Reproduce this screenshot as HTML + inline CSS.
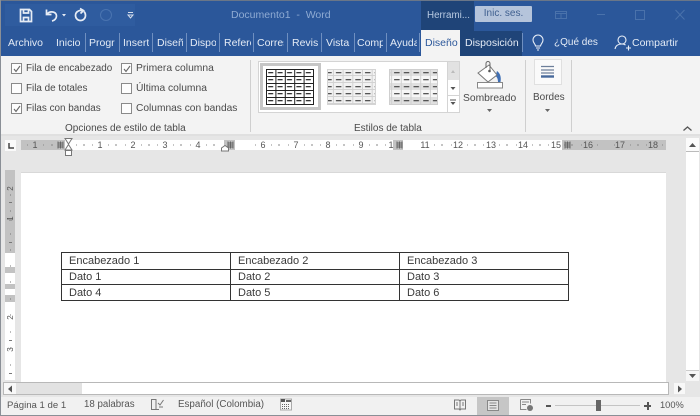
<!DOCTYPE html>
<html lang="es"><head><meta charset="utf-8"><title>Documento1 - Word</title>
<style>
html,body{margin:0;padding:0}
body{width:700px;height:416px;overflow:hidden;position:relative;background:#e6e6e6;font-family:"Liberation Sans",sans-serif;color:#444}
#r{position:absolute;left:0;top:0;width:700px;height:416px;overflow:hidden;filter:blur(.3px)}
.a{position:absolute;white-space:nowrap}
.t{position:absolute;top:36px;font-size:10.5px;color:#e4ebf5;line-height:14px;white-space:nowrap;overflow:hidden}
.s{position:absolute;top:33px;width:1px;height:19px;background:#6f8fc0}
.l{position:absolute;font-size:10px;color:#4a4a4a;line-height:13px;white-space:nowrap}
.c{position:absolute;width:9px;height:9px;border:1px solid #8a8a8a;background:#fdfdfd}
.c svg{position:absolute;left:-.5px;top:-.5px}
.n{position:absolute;top:140px;font-size:9px;color:#555;line-height:10px;width:14px;text-align:center}
.v{position:absolute;left:6px;width:9px;height:9px;font-size:8px;color:#555;line-height:9px;text-align:center;transform:rotate(-90deg)}
td{border:1px solid #333;padding:0 0 0 7px;font-size:11px;color:#3a3a3a;line-height:14px;width:161px;box-sizing:content-box}
table{border-collapse:collapse;table-layout:fixed;width:508px}
</style></head><body><div id="r">
<!-- title -->
<div class="a" style="left:0;top:0;width:700px;height:56px;background:#2b579a"></div>
<div class="a" style="left:0;top:0;width:700px;height:1px;background:#6a7688"></div>
<div class="a" style="left:0;top:0;width:1px;height:416px;background:#8a8f96"></div>
<div class="a" style="left:5px;top:4px;width:130px;height:22px;background:#2f5c9f"></div>
<svg class="a" style="left:18px;top:7px" width="120" height="17" viewBox="0 0 120 17" fill="none" stroke="#e6ecf5" stroke-width="1.700">
<path d="M2.500 2.500h9l2 2v10h-11z"/><path d="M5.500 2.500v3.500h5v-3.500M5.500 14.500v-4h5v4"/>
<path d="M28.500 2.500v5h5"/><path d="M29 7c3-3.500 9.500-2.500 9.500 2 0 2.500-2 4.500-4.500 5"/>
<path d="M44 7l2 2.500 2-2.500z" fill="#e6ecf5" stroke="none"/>
<path d="M62 1.500l3.500 2-3 3"/><path d="M64 3.500c-4-.5-6.500 2-6.500 5 0 3 2.500 5 5 5s5-2 5-5c0-1.500-.5-3-1.500-4"/>
<circle cx="88" cy="8" r="5.500" stroke="#4a74b0" stroke-width="1"/>
<path d="M110 5.500h5M110 8h5l-2.500 3z" stroke="#d5deec" stroke-width="1"/>
</svg>
<div class="a" style="left:231px;top:8px;font-size:10.500px;line-height:14px;color:#8fabd3">Documento1 &nbsp;-&nbsp; Word</div>
<div class="a" style="left:421px;top:1px;width:53px;height:55px;background:#1f4478"></div>
<div class="a" style="left:427px;top:9px;font-size:9.800px;line-height:13px;color:#b9cbe3">Herrami...</div>
<div class="a" style="left:475px;top:6px;width:57px;height:16px;background:#b5c4db;border-radius:1px;color:#3f5f8f;font-size:10px;line-height:16px;text-align:center">Inic. ses.</div>
<svg class="a" style="left:555px;top:7px" width="140" height="16" viewBox="0 0 140 16" fill="none" stroke="#4a72ab" stroke-width="1">
<path d="M.5 4.500h11v7H.5zM.5 6.500h11M6 7v4"/><path d="M42 7.500h8"/><rect x="80.500" y="3.500" width="9" height="9"/><path d="M120.500 3l9 9.500M129.500 3l-9 9.500"/></svg>
<!-- tabs -->
<div class="t" style="left:8px;width:40px">Archivo</div>
<div class="t" style="left:56px;width:26px">Inicio</div><div class="s" style="left:85px"></div>
<div class="t" style="left:89px;width:26px">Progr</div><div class="s" style="left:119px"></div>
<div class="t" style="left:123px;width:26px">Insert</div><div class="s" style="left:152px"></div>
<div class="t" style="left:157px;width:26px">Diseñ</div><div class="s" style="left:186px"></div>
<div class="t" style="left:190px;width:26px">Dispo</div><div class="s" style="left:219px"></div>
<div class="t" style="left:224px;width:27px">Refere</div><div class="s" style="left:253px"></div>
<div class="t" style="left:257px;width:27px">Corres</div><div class="s" style="left:287px"></div>
<div class="t" style="left:292px;width:26px">Revisa</div><div class="s" style="left:321px"></div>
<div class="t" style="left:326px;width:26px">Vista</div><div class="s" style="left:354px"></div>
<div class="t" style="left:357px;width:26px">Comp</div><div class="s" style="left:386px"></div>
<div class="t" style="left:390px;width:27px">Ayuda</div><div class="s" style="left:419px"></div>
<div class="a" style="left:421px;top:30px;width:39px;height:27px;background:#f3f3f3"></div>
<div class="t" style="left:425px;color:#2b579a">Diseño</div>
<div class="a" style="left:460px;top:31px;width:62px;height:25px;background:#1f4478"></div>
<div class="t" style="left:465px">Disposición</div><div class="s" style="left:522px"></div>
<svg class="a" style="left:530px;top:34px" width="16" height="17" viewBox="0 0 16 17" fill="none" stroke="#e8eef7" stroke-width="1.100"><path d="M5.500 12c0-2-2.500-3-2.500-6a5 5 0 0 1 10 0c0 3-2.500 4-2.500 6zM6 14h4M7 16h2"/></svg>
<div class="t" style="left:554px;font-size:10px">¿Qué des</div>
<svg class="a" style="left:614px;top:34px" width="18" height="17" viewBox="0 0 18 17" fill="none" stroke="#e8eef7" stroke-width="1.100"><circle cx="8" cy="6" r="4"/><path d="M1 15c.5-3 3-5 7-5 1.500 0 2.500.3 3.500 1M12 14h5M14.500 11.500v5"/></svg>
<div class="t" style="left:632px">Compartir</div>
<!-- ribbon -->
<div class="a" style="left:1px;top:56px;width:699px;height:78px;background:#f3f3f3"></div>
<div class="a" style="left:250px;top:60px;width:1px;height:72px;background:#cfcfcf"></div>
<div class="a" style="left:525px;top:60px;width:1px;height:72px;background:#cfcfcf"></div>
<div class="a" style="left:571px;top:60px;width:1px;height:72px;background:#cfcfcf"></div>
<!-- checks -->
<div class="c" style="left:11px;top:63px"><svg width="10" height="10" fill="none" stroke="#666" stroke-width="1.100"><path d="M2 5l2 2.500 4-5.500"/></svg></div>
<div class="c" style="left:11px;top:83px"></div>
<div class="c" style="left:11px;top:103px"><svg width="10" height="10" fill="none" stroke="#666" stroke-width="1.100"><path d="M2 5l2 2.500 4-5.500"/></svg></div>
<div class="c" style="left:121px;top:63px"><svg width="10" height="10" fill="none" stroke="#666" stroke-width="1.100"><path d="M2 5l2 2.500 4-5.500"/></svg></div>
<div class="c" style="left:121px;top:83px"></div>
<div class="c" style="left:121px;top:103px"></div>
<div class="l" style="left:26px;top:62px;font-size:9.900px">Fila de encabezado</div>
<div class="l" style="left:26px;top:82px;font-size:9.900px">Fila de totales</div>
<div class="l" style="left:26px;top:102px;font-size:9.900px">Filas con bandas</div>
<div class="l" style="left:136px;top:62px;font-size:10.300px">Primera columna</div>
<div class="l" style="left:136px;top:82px;font-size:10.300px">Última columna</div>
<div class="l" style="left:136px;top:102px;font-size:10.200px">Columnas con bandas</div>
<div class="l" style="left:65px;top:122px">Opciones de estilo de tabla</div>
<div class="l" style="left:354px;top:122px">Estilos de tabla</div>
<!-- gallery -->
<div class="a" style="left:258px;top:61px;width:200px;height:50px;background:#fff;border:1px solid #d4d4d4"></div>
<div class="a" style="left:260px;top:63px;width:61px;height:47px;background:#c6c6c6"></div>
<div class="a" style="left:263px;top:66px;width:55px;height:41px;background:#fff"></div>
<svg class="a" style="left:266px;top:69px" width="175" height="36" viewBox="0 0 175 36">
<defs>
<pattern id="p" width="9.400" height="7" patternUnits="userSpaceOnUse"><rect x="2.200" y="3" width="5" height="1.300" fill="#333"/></pattern>
<pattern id="q" width="9.700" height="7" patternUnits="userSpaceOnUse"><rect width="9.700" height="7" fill="#f2f2f2"/><path d="M9.200 0v7M0 6.500h9.700" stroke="#d2d2d2" fill="none"/><rect x="2" y="3" width="5.500" height="1.300" fill="#555"/></pattern>
<pattern id="w" width="9.700" height="14" patternUnits="userSpaceOnUse"><rect width="9.700" height="7" fill="#e0e0e0"/><rect y="7" width="9.700" height="7" fill="#f6f6f6"/><path d="M9.200 0v14" stroke="#d0d0d0" fill="none"/><rect x="2" y="3" width="5.500" height="1.300" fill="#555"/><rect x="2" y="10" width="5.500" height="1.300" fill="#555"/></pattern>
</defs>
<rect x=".5" y=".5" width="47" height="35" fill="url(#p)" stroke="#222"/>
<path d="M9.900 0v36M19.300 0v36M28.700 0v36M38.100 0v36M0 7.500h48M0 14.500h48M0 21.500h48M0 28.500h48" stroke="#222" stroke-width="1"/>
<rect x="61.500" y=".5" width="48" height="35" fill="url(#q)" stroke="#d4d4d4"/>
<rect x="123.500" y=".5" width="48" height="35" fill="url(#w)" stroke="#cfcfcf"/>
</svg>
<div class="a" style="left:447px;top:62px;width:12px;height:18px;background:#e2e2e2"></div>
<div class="a" style="left:447px;top:62px;width:1px;height:50px;background:#d4d4d4"></div>
<div class="a" style="left:447px;top:95px;width:12px;height:1px;background:#d4d4d4"></div>
<svg class="a" style="left:448px;top:66px" width="10" height="44" viewBox="0 0 10 44" fill="#555"><path d="M3 7l2-3 2 3z" fill="#bbb"/><path d="M2.500 21h5l-2.500 3z"/><path d="M2 33.500h6v1H2zM2.500 36h5l-2.500 3z"/></svg>
<!-- sombreado -->
<svg class="a" style="left:474px;top:60px" width="32" height="30" viewBox="0 0 32 30" fill="none">
<path d="M23 11c3 2 4.500 6 3.500 11h-2.500c0-3-1-5-2.500-6z" fill="#3f6fb5"/>
<path d="M15 5l8 10-9 7-10-9z" fill="#fff" stroke="#777"/><path d="M12 8V3.500a2 2 0 0 1 4 0V10" stroke="#666"/><circle cx="15.500" cy="11" r="1.300" fill="#555"/>
<rect x="3.500" y="22.500" width="25" height="5.500" fill="#fff" stroke="#888"/></svg>
<div class="l" style="left:463px;top:92px;font-size:10.300px">Sombreado</div>
<svg class="a" style="left:486px;top:108px" width="7" height="5"><path d="M1 1h5L3.500 4z" fill="#666"/></svg>
<!-- bordes -->
<div class="a" style="left:534px;top:59px;width:26px;height:24px;background:#fafafa;border:1px solid #e0e0e0"></div>
<svg class="a" style="left:541px;top:65px" width="14" height="14"><path d="M0 1.500h13M0 5h13M0 8h13" stroke="#6d7f9a" stroke-width="1.200"/><path d="M0 11.500h13" stroke="#47699b" stroke-width="2.400"/></svg>
<div class="l" style="left:533px;top:91px">Bordes</div>
<svg class="a" style="left:544px;top:108px" width="7" height="5"><path d="M1 1h5L3.500 4z" fill="#666"/></svg>
<svg class="a" style="left:682px;top:125px" width="11" height="7" fill="none" stroke="#555" stroke-width="1.300"><path d="M1.500 5.500L5.500 2l4 3.500"/></svg>
<div class="a" style="left:1px;top:134px;width:699px;height:2px;background:#e0e0e0"></div>
<!-- ruler -->
<div class="a" style="left:5px;top:140px;width:11px;height:11px;background:#fafafa"></div>
<svg class="a" style="left:7px;top:142px" width="8" height="8"><path d="M2 1v5h5" fill="none" stroke="#444" stroke-width="1.500"/></svg>
<div class="a" style="left:21px;top:140px;width:645px;height:10px;background:#fff"></div>
<div class="a" style="left:21px;top:140px;width:44px;height:10px;background:#c2c2c2"></div>
<div class="a" style="left:562px;top:140px;width:104px;height:10px;background:#c2c2c2"></div>
<div class="a" style="left:224px;top:140px;width:11px;height:10px;background:#c2c2c2"></div>
<div class="a" style="left:393px;top:140px;width:10px;height:10px;background:#c2c2c2"></div>
<svg class="a" style="left:21px;top:140px" width="645" height="10">
<g stroke="#888" fill="none">
<path d="M6 5h1M22 5h1M31 4v2M55 5h1M63 4v2M71 5h1M87 5h1M95 4v2M104 5h1M120 5h1M128 4v2M136 5h1M152 5h1M160 4v2M169 5h1M185 5h1M193 4v2M234 5h1M250 5h1M258 4v2M267 5h1M283 5h1M291 4v2M299 5h1M315 5h1M323 4v2M332 5h1M348 5h1M356 4v2M364 5h1M413 5h1M421 4v2M430 5h1M446 5h1M454 4v2M462 5h1M478 5h1M486 4v2M495 5h1M511 5h1M519 4v2M527 5h1M593 5h1M576 5h1M584 0v0M609 5h1M600 5h0M617 4v2M625 5h1M641 5h1M649 0v0"/>
<path d="M543 5h1M551 4v2M560 5h1"/>
</g>
<!-- grid markers -->
<g stroke="#666" fill="none">
<path d="M37 1.500v7M39.500 1.500v7M42 1.500v7M37 3h5M37 5h5M37 7h5"/>
<path d="M207 1.500v7M209.500 1.500v7M212 1.500v7M207 3h5M207 5h5M207 7h5"/>
<path d="M376 1.500v7M378.500 1.500v7M381 1.500v7M376 3h5M376 5h5M376 7h5"/>
<path d="M544 1.500v7M546.500 1.500v7M549 1.500v7M544 3h5M544 5h5M544 7h5"/>
</g></svg>
<div class="n" style="left:28px">1</div><div class="n" style="left:93px">1</div><div class="n" style="left:126px">2</div><div class="n" style="left:158px">3</div><div class="n" style="left:191px">4</div><div class="n" style="left:256px">6</div><div class="n" style="left:289px">7</div><div class="n" style="left:321px">8</div><div class="n" style="left:354px">9</div><div class="n" style="left:384px">1</div><div class="n" style="left:418px">11</div><div class="n" style="left:451px">12</div><div class="n" style="left:484px">13</div><div class="n" style="left:516px">14</div><div class="n" style="left:549px">15</div><div class="n" style="left:581px">16</div><div class="n" style="left:613px">17</div><div class="n" style="left:646px">18</div>
<svg class="a" style="left:57px;top:138px" width="20" height="19" fill="#fff" stroke="#777"><path d="M8 .5h7l-3.500 5.500z"/><path d="M11.500 6.500L8 12h7z"/><rect x="8.500" y="12.500" width="6" height="5"/></svg>
<svg class="a" style="left:219px;top:145px" width="12" height="7" fill="#fff" stroke="#777"><path d="M2.500 6V3L6 .5 9.500 3v3z"/></svg>
<!-- v ruler -->
<div class="a" style="left:5px;top:170px;width:10px;height:210px;background:#fff"></div>
<div class="a" style="left:5px;top:170px;width:10px;height:83px;background:#c2c2c2"></div>
<div class="a" style="left:5px;top:267px;width:10px;height:6px;background:#c2c2c2"></div>
<div class="a" style="left:5px;top:284px;width:10px;height:5px;background:#c2c2c2"></div>
<div class="a" style="left:5px;top:295px;width:10px;height:7px;background:#c2c2c2"></div>
<svg class="a" style="left:6px;top:170px" width="9" height="210" stroke="#777" fill="none"><path d="M4 25h1M3 32.500h3M4 41h1M3 50h3M4 64h1M3 72.500h3M4 80h1M4 96h1M4 112h1M4 129h1M4 145h1M4 162h1M3 170.500h3M4 178h1M3 203.500h3M4 195h1"/></svg>
<div class="v" style="top:184px">2</div><div class="v" style="top:214px">1</div><div class="v" style="top:313px">2</div><div class="v" style="top:345px">3</div>
<!-- page -->
<div class="a" style="left:21px;top:172px;width:645px;height:209px;background:#fff;border-top:1px solid #d8d8d8"></div>
<div class="a" style="left:61px;top:252px"><table>
<tr><td style="height:16px">Encabezado 1</td><td>Encabezado 2</td><td>Encabezado 3</td></tr>
<tr><td style="height:14px">Dato 1</td><td>Dato 2</td><td>Dato 3</td></tr>
<tr><td style="height:15px">Dato 4</td><td>Dato 5</td><td>Dato 6</td></tr>
</table></div>
<!-- v scrollbar -->
<div class="a" style="left:686px;top:138px;width:13px;height:242px;background:#fff"></div>
<div class="a" style="left:686px;top:138px;width:13px;height:13px;background:#fbfbfb;border-bottom:1px solid #bbb"></div>
<svg class="a" style="left:688px;top:142px" width="9" height="6"><path d="M1 5h7L4.500 1z" fill="#555"/></svg>
<div class="a" style="left:686px;top:370px;width:13px;height:10px;background:#f6f6f6;border-top:1px solid #ccc"></div>
<svg class="a" style="left:688px;top:373px" width="9" height="6"><path d="M1 1h7L4.500 5z" fill="#555"/></svg>
<!-- h scrollbar -->
<div class="a" style="left:3px;top:382px;width:666px;height:13px;background:#b8b8b8"></div>
<div class="a" style="left:4px;top:383px;width:12px;height:11px;background:#f8f8f8"></div>
<svg class="a" style="left:7px;top:385px" width="6" height="8"><path d="M5 .5v7L1 4z" fill="#555"/></svg>
<div class="a" style="left:16px;top:383px;width:66px;height:11px;background:#e2e2e2"></div>
<div class="a" style="left:82px;top:383px;width:586px;height:11px;background:#fff"></div>
<div class="a" style="left:674px;top:383px;width:11px;height:11px;background:#f8f8f8"></div>
<svg class="a" style="left:677px;top:385px" width="6" height="8"><path d="M1 .5v7L5 4z" fill="#555"/></svg>
<!-- status -->
<div class="a" style="left:1px;top:397px;width:699px;height:19px;background:#f1f1f1"></div>
<div class="a" style="left:0;top:415px;width:700px;height:1px;background:#8a8f96"></div>
<div class="l" style="left:7px;top:399px;font-size:9.600px;color:#555">Página 1 de 1</div>
<div class="l" style="left:84px;top:398px;font-size:9.700px;color:#555">18 palabras</div>
<svg class="a" style="left:150px;top:398px" width="14" height="13" fill="none" stroke="#777"><path d="M1.500 1.500H6v10H1.500zM6 11.500h3"/><path d="M8 5l2 2 3.500-5M9 9h4"/></svg>
<div class="l" style="left:178px;top:398px;font-size:9.800px;color:#555">Español (Colombia)</div>
<svg class="a" style="left:280px;top:398px" width="12" height="13"><rect x=".5" y="1" width="11" height="11" fill="#f6f6f6" stroke="#aaa"/><rect x="1" y="1" width="4" height="3" fill="#555"/><rect x="6" y="2" width="5" height="2" fill="#666"/><path d="M2 6.500h8M2 8.500h8M2 10.500h8" stroke="#666" stroke-dasharray="1 1"/></svg>
<svg class="a" style="left:453px;top:398px" width="14" height="13" fill="none" stroke="#777"><path d="M1.500 2h4.500l1 1 1-1h4.500v9H8l-1 1-1-1H1.500zM7 3v8M3 5h2M3 7h2M9 5h2M9 7h2"/></svg>
<div class="a" style="left:477px;top:397px;width:32px;height:18px;background:#c6c6c6"></div>
<svg class="a" style="left:486px;top:399px" width="14" height="13" fill="#e4e4e4" stroke="#888"><path d="M1.500 1.500h11v10h-11zM3.500 4h7M3.500 6.500h7M3.500 9h7"/></svg>
<svg class="a" style="left:519px;top:398px" width="15" height="14" fill="none" stroke="#888"><path d="M1.500 1.500h10v4M1.500 1.500v10h6M3 4h7M3 6.500h4"/><circle cx="11" cy="10" r="3" fill="#777" stroke="none"/></svg>
<div class="a" style="left:546px;top:405px;width:5px;height:2px;background:#555"></div>
<div class="a" style="left:555px;top:405px;width:85px;height:1px;background:#c4c4c4"></div>
<div class="a" style="left:596px;top:400px;width:5px;height:11px;background:#666"></div>
<div class="a" style="left:644px;top:405px;width:7px;height:2px;background:#555"></div>
<div class="a" style="left:646.500px;top:402px;width:2px;height:8px;background:#555"></div>
<div class="l" style="left:660px;top:399px;font-size:9.300px;color:#555">100%</div>
</div></body></html>
